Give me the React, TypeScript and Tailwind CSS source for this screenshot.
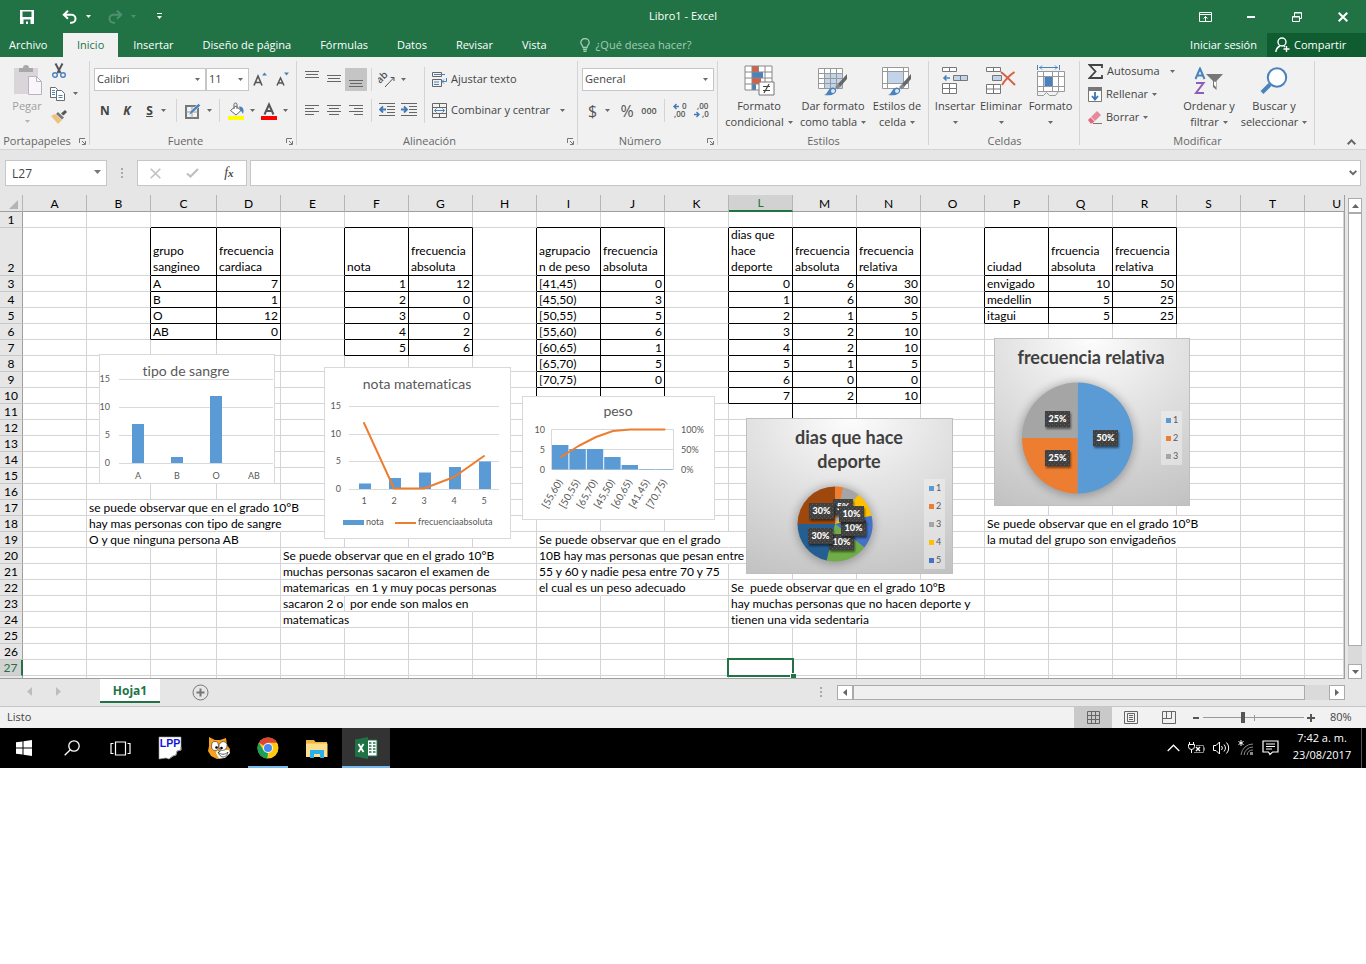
import { Fragment } from "react";
import type { ReactNode } from "react";

const COLS = "ABCDEFGHIJKLMNOPQRSTU".split("");
const ROWS = Array.from({ length: 27 }, (_, i) => i + 1);

const CELLS: Record<string, string | number> = {
  C2: "grupo\nsangineo", D2: "frecuencia\ncardiaca",
  C3: "A", D3: 7, C4: "B", D4: 1, C5: "O", D5: 12, C6: "AB", D6: 0,
  F2: "nota", G2: "frecuencia\nabsoluta",
  F3: 1, G3: 12, F4: 2, G4: 0, F5: 3, G5: 0, F6: 4, G6: 2, F7: 5, G7: 6,
  I2: "agrupacio\nn de peso", J2: "frecuencia\nabsoluta",
  I3: "[41,45)", J3: 0, I4: "[45,50)", J4: 3, I5: "[50,55)", J5: 5,
  I6: "[55,60)", J6: 6, I7: "[60,65)", J7: 1, I8: "[65,70)", J8: 5, I9: "[70,75)", J9: 0,
  L2: "dias que\nhace\ndeporte", M2: "frecuencia\nabsoluta", N2: "frecuencia\nrelativa",
  L3: 0, M3: 6, N3: 30, L4: 1, M4: 6, N4: 30, L5: 2, M5: 1, N5: 5, L6: 3, M6: 2, N6: 10,
  L7: 4, M7: 2, N7: 10, L8: 5, M8: 1, N8: 5, L9: 6, M9: 0, N9: 0, L10: 7, M10: 2, N10: 10,
  P2: "ciudad", Q2: "frcuencia\nabsoluta", R2: "frecuencia\nrelativa",
  P3: "envigado", Q3: 10, R3: 50, P4: "medellin", Q4: 5, R4: 25, P5: "itagui", Q5: 5, R5: 25,
  B17: "se puede observar que en el grado 10°B",
  B18: "hay mas personas con tipo de sangre",
  B19: "O y que ninguna persona AB",
  E20: "Se puede observar que en el grado 10°B",
  E21: "muchas personas sacaron el examen de",
  E22: "matemaricas  en 1 y muy pocas personas",
  E23: "sacaron 2 o",
  F23: " por ende son malos en",
  E24: "matematicas",
  I19: "Se puede observar que en el grado",
  I20: "10B hay mas personas que pesan entre",
  I21: "55 y 60 y nadie pesa entre 70 y 75",
  I22: "el cual es un peso adecuado",
  L22: "Se  puede observar que en el grado 10°B",
  L23: "hay muchas personas que no hacen deporte y",
  L24: "tienen una vida sedentaria",
  P18: "Se puede observar que en el grado 10°B",
  P19: "la mutad del grupo son envigadeños",
};

// first column, last column, first row, last row
const BOXES: [string, string, number, number][] = [
  ["C", "D", 2, 6],
  ["F", "G", 2, 7],
  ["I", "J", 2, 9],
  ["L", "N", 2, 10],
  ["P", "R", 2, 5],
];
const DARK_RIGHT = ["H10", "I10", "J10", "L11"];

// columns whose right gridline is hidden by overflowing text
const SPILL: Record<number, string> = {
  17: "BCD", 18: "BCDPQR", 19: "BCIJKPQR", 20: "EFGIJK", 21: "EFGIJ",
  22: "EFGIJLMN", 23: "FGLMN", 24: "ELM",
};

function boxed(col: number, row: number) {
  return BOXES.some(
    ([a, b, r1, r2]) => col >= COLS.indexOf(a) && col <= COLS.indexOf(b) && row >= r1 && row <= r2
  );
}

function cellBorder(col: number, row: number) {
  const here = boxed(col, row);
  let right = "border-r-[#d4d4d4]";
  if (here || boxed(col + 1, row) || DARK_RIGHT.includes(COLS[col] + row)) right = "border-r-black";
  else if (SPILL[row]?.includes(COLS[col])) right = "border-r-white";
  const bottom = here || boxed(col, row + 1) ? "border-b-black" : "border-b-[#d4d4d4]";
  return `${right} ${bottom}`;
}

function Caret({ className = "" }: { className?: string }) {
  return (
    <svg width="5" height="3" viewBox="0 0 5 3" className={`shrink-0 ${className || "text-[#6a6a6a]"}`}>
      <path d="M0 0h5L2.5 3z" fill="currentColor" />
    </svg>
  );
}

function TitleBar() {
  return (
    <header className="flex h-[33px] items-center bg-[#217346] text-white">
      <div className="flex flex-1 items-center">
        <button aria-label="Guardar" className="ml-5">
          <svg width="14" height="14" viewBox="0 0 14 14">
            <path d="M0 0h14v14H0z" fill="#fff" />
            <path d="M2.500 1.500h9V7h-9zM3.500 9.500h7V14H8v-2.500H6V14H3.500z" fill="#217346" />
          </svg>
        </button>
        <button aria-label="Deshacer" className="ml-7 flex items-center gap-2">
          <svg width="16" height="14" viewBox="0 0 16 14" fill="none" stroke="#fff" strokeWidth="2">
            <path d="M6 .8L1.8 4.8 6 8.8M2 4.8h7.5a4 4 0 0 1 0 8H8" />
          </svg>
          <Caret className="text-white" />
        </button>
        <button aria-label="Rehacer" className="ml-4 flex items-center gap-2 text-[#4f9070]">
          <svg width="16" height="14" viewBox="0 0 16 14" fill="none" stroke="currentColor" strokeWidth="2">
            <path d="M10 .8l4.200 4L10 8.800M14 4.800H6.500a4 4 0 0 0 0 8H8" />
          </svg>
          <Caret className="text-[#4f9070]" />
        </button>
        <button aria-label="Personalizar barra" className="ml-5">
          <svg width="7" height="7" viewBox="0 0 7 7" fill="#fff">
            <path d="M1 0h5v1H1zM1 3h5L3.500 6z" />
          </svg>
        </button>
      </div>
      <h1 className="text-[11px]">Libro1 - Excel</h1>
      <div className="flex flex-1 justify-end">
        <button aria-label="Opciones de cinta" className="flex w-[46px] justify-center">
          <svg width="13" height="10" viewBox="0 0 13 10" fill="none" stroke="#fff">
            <path d="M.5.5h12v9H.5zM.5 2.500h12M6.500 9V4.500M4.500 6.500l2-2 2 2" />
          </svg>
        </button>
        <button aria-label="Minimizar" className="flex w-[46px] items-center justify-center">
          <span className="h-0.5 w-2 bg-white" />
        </button>
        <button aria-label="Restaurar" className="flex w-[46px] justify-center">
          <svg width="10" height="10" viewBox="0 0 10 10" fill="none" stroke="#fff">
            <path d="M.5 4.500h7v5h-7zM.5 5h7M2.500 4V.5h7v6H8M2.500 1h7" />
          </svg>
        </button>
        <button aria-label="Cerrar" className="flex w-[46px] justify-center">
          <svg width="10" height="10" viewBox="0 0 10 10" stroke="#fff" strokeWidth="2">
            <path d="M.7.7l8.600 8.600M9.300.7L.7 9.300" />
          </svg>
        </button>
      </div>
    </header>
  );
}

const TABS = ["Inicio", "Insertar", "Diseño de página", "Fórmulas", "Datos", "Revisar", "Vista"];

function TabStrip() {
  return (
    <nav className="flex h-6 items-stretch gap-px bg-[#217346] text-[11px] text-white">
      <button className="w-[62px] pl-[9px] text-left">Archivo</button>
      {TABS.map((tab, i) => (
        <button key={tab} className={`px-3.5 ${i === 0 ? "bg-[#f1f1f1] text-[#217346]" : ""}`}>
          {tab}
        </button>
      ))}
      <button className="flex items-center gap-1.5 pl-[18px] text-[#a6cbb5]">
        <svg width="10" height="14" viewBox="0 0 10 14" fill="none" stroke="currentColor" strokeWidth="1.300">
          <path d="M3 9.500C3 7.500.8 6.800.8 4.500a4.200 4 0 0 1 8.400 0C9.200 6.800 7 7.500 7 9.500zM3 11.500h4M3.500 13.300h3" />
        </svg>
        ¿Qué desea hacer?
      </button>
      <div className="ml-auto flex items-stretch">
        <button className="px-2.5">Iniciar sesión</button>
        <button className="flex w-[99px] items-center gap-1 bg-[#0e5c2f] pl-2">
          <svg width="15" height="16" viewBox="0 0 15 16" fill="none" stroke="#fff" strokeWidth="1.400">
            <circle cx="7" cy="5" r="4" />
            <path d="M.8 15c.3-3 2-5 4.200-6M9 9l1 1M11.500 9v6M8.500 12h6" />
          </svg>
          Compartir
        </button>
      </div>
    </nav>
  );
}

function Group({ label, width, launcher, children }: { label: string; width: string; launcher?: boolean; children: ReactNode }) {
  return (
    <section className={`relative flex shrink-0 flex-col ${width}`}>
      <div className="flex h-[76px] px-1">{children}</div>
      <div className={`h-4 text-center leading-4 text-[#666] ${launcher ? "pr-4" : ""}`}>{label}</div>
      {launcher && (
        <button aria-label={`Más opciones de ${label}`} className="absolute right-1 bottom-1">
          <svg width="7" height="7" viewBox="0 0 7 7" fill="none" stroke="#777">
            <path d="M.5 5V.5H6M3 3l3 3M6.500 3v3.500H3" />
          </svg>
        </button>
      )}
      <span className="absolute top-1 right-0 bottom-1 w-px bg-[#d4d4d4]" />
    </section>
  );
}

function Tool({ label, children, className = "w-[22px]" }: { label: string; children: ReactNode; className?: string }) {
  return (
    <button aria-label={label} className={`flex h-[23px] shrink-0 items-center justify-center ${className}`}>
      {children}
    </button>
  );
}

function Rule() {
  return <span className="h-[23px] w-px shrink-0 bg-[#d4d4d4]" />;
}

function Combo({ label, value, width }: { label: string; value: string; width: string }) {
  return (
    <div className={`relative h-[23px] ${width}`}>
      <select aria-label={label} className="h-full w-full appearance-none border border-[#c6c6c6] bg-white pl-0.5 text-[#444]">
        <option>{value}</option>
      </select>
      <span className="pointer-events-none absolute top-2.5 right-1.5">
        <Caret />
      </span>
    </div>
  );
}

function Lines({ d, arrow }: { d: string; arrow?: string }) {
  const width = arrow ? 16 : 14;
  return (
    <svg width={width} height="17" viewBox={`0 0 ${width} 17`} fill="none" stroke="#666">
      <path d={d} />
      {arrow && <path d={arrow} stroke="#3f7ab8" strokeWidth="1.800" />}
    </svg>
  );
}

function BigButton({ icon, top, bottom, width }: { icon: ReactNode; top: string; bottom?: string; width: string }) {
  return (
    <button className={`flex shrink-0 flex-col items-center pt-1.5 leading-4 text-[#444] ${width}`}>
      <span className="flex h-[35px] items-center">{icon}</span>
      <span className="whitespace-nowrap">{top}</span>
      <span className="flex h-4 items-center gap-1 whitespace-nowrap">
        {bottom}
        <Caret />
      </span>
    </button>
  );
}

function Clipboard() {
  return (
    <Group label="Portapapeles" width="w-[90px]" launcher>
      <button className="flex w-[46px] flex-col items-center pt-1.5 leading-4 text-[#a0a0a0]">
        <svg width="30" height="35" viewBox="0 0 30 35">
          <path d="M2 5h24v26H2z" fill="#d9d5d9" />
          <path d="M7 9V5h4a3 3 0 0 1 6 0h4v4z" fill="#a8a8a8" />
          <path d="M16.500 13.500h8l5 5v13h-13z" fill="#f8f5fb" stroke="#b8b4bd" />
          <path d="M24.500 13.500v5h5" fill="none" stroke="#b8b4bd" />
        </svg>
        Pegar
        <Caret className="my-1.5 text-[#b5b5b5]" />
      </button>
      <div className="flex flex-col pt-0.5">
        <Tool label="Cortar" className="w-[18px]">
          <svg width="14" height="15" viewBox="0 0 14 15" fill="none">
            <path d="M3.500.5l5 9.500M10.500.5l-5 9.500" stroke="#555" strokeWidth="2" />
            <circle cx="3" cy="12" r="2.300" stroke="#4a82bd" strokeWidth="1.400" />
            <circle cx="11" cy="12" r="2.300" stroke="#4a82bd" strokeWidth="1.400" />
          </svg>
        </Tool>
        <Tool label="Copiar" className="w-7 gap-2">
          <svg width="15" height="14" viewBox="0 0 15 14" fill="#fff" stroke="#6b6b6b" className="shrink-0">
            <path d="M.5.5h5l2 2v8h-7z" />
            <path d="M6.500 3.500h5l3 3v7h-8z" />
            <path d="M2 3.500h3M2 5.500h3M2 7.500h3M8.500 8.500h4M8.500 10.500h4" stroke="#4a82bd" />
          </svg>
          <Caret />
        </Tool>
        <Tool label="Copiar formato" className="w-[18px]">
          <svg width="16" height="14" viewBox="0 0 16 14">
            <path d="M0 6l4-2 7 6-4 4z" fill="#eec27c" />
            <path d="M5 4l2-2 6 5.500-2 2z" fill="#777" />
            <path d="M10 3.500L14 0l2 2-3.500 3.500z" fill="#555" />
          </svg>
        </Tool>
      </div>
    </Group>
  );
}

function FontGroup() {
  return (
    <Group label="Fuente" width="w-[207px]" launcher>
      <div className="flex flex-col gap-2 pt-[11px]">
        <div className="flex">
          <Combo label="Fuente" value="Calibri" width="w-[112px]" />
          <Combo label="Tamaño de fuente" value="11" width="w-[43px]" />
          <Tool label="Aumentar tamaño">
            <svg width="14" height="15" viewBox="0 0 14 15">
              <path d="M1 13.500L5 4l4 9.500M2.500 10.500h5" fill="none" stroke="#555" strokeWidth="1.600" />
              <path d="M9 3.500h5l-2.500-3z" fill="#4a82bd" />
            </svg>
          </Tool>
          <Tool label="Disminuir tamaño">
            <svg width="13" height="15" viewBox="0 0 13 15">
              <path d="M1 13.500L4.500 6 8 13.500M2.300 11h4.400" fill="none" stroke="#555" strokeWidth="1.500" />
              <path d="M8 .5h5l-2.500 3z" fill="#4a82bd" />
            </svg>
          </Tool>
        </div>
        <div className="flex text-xs text-[#444]">
          <Tool label="Negrita"><b>N</b></Tool>
          <Tool label="Cursiva"><b className="italic">K</b></Tool>
          <Tool label="Subrayado" className="w-9 gap-2"><b className="underline">S</b><Caret /></Tool>
          <span className="w-0.5" />
          <Rule />
          <Tool label="Bordes" className="w-[42px] gap-1.5">
            <svg width="16" height="16" viewBox="0 0 16 16" fill="none">
              <path d="M1 3h12v12H1z" stroke="#777" strokeWidth="2" />
              <path d="M1 9h12M7 3v12" stroke="#999" />
              <path d="M4 12l1-3.500L13.500.5l2 2L7 10.500z" fill="#4a82bd" stroke="#f1f1f1" strokeWidth=".6" />
            </svg>
            <Caret />
          </Tool>
          <Rule />
          <Tool label="Color de relleno" className="w-[42px] gap-1.5">
            <svg width="16" height="18" viewBox="0 0 16 18">
              <path d="M2.500 8.500L8 4l5 4.500L8 13z" fill="#fff" stroke="#666" />
              <path d="M6 7V2.500a1.500 1.500 0 0 1 3 0V7" fill="none" stroke="#666" />
              <path d="M11 4.500c4-.5 5.500 3 4 7.500-1-2-1.500-3-3-4z" fill="#4a82bd" />
              <path d="M0 14h16v4H0z" fill="#ff0" />
            </svg>
            <Caret />
          </Tool>
          <Tool label="Color de fuente" className="w-6 gap-1.5">
            <svg width="16" height="18" viewBox="0 0 16 18" className="shrink-0">
              <path d="M3.500 12.500L8 2.500l4.500 10M5.500 9h5" fill="none" stroke="#555" strokeWidth="2" />
              <path d="M0 14h16v4H0z" fill="red" />
            </svg>
            <Caret />
          </Tool>
        </div>
      </div>
    </Group>
  );
}

function AlignGroup() {
  return (
    <Group label="Alineación" width="w-[281px]" launcher>
      <div className="flex w-[70px] shrink-0 flex-col gap-2 pt-[11px]">
        <div className="flex">
          <Tool label="Alinear arriba"><Lines d="M0 .5h14M1 3.500h12M0 6.500h14" /></Tool>
          <Tool label="Alinear al medio"><Lines d="M0 4.500h14M1 7.500h12M0 10.500h14" /></Tool>
          <Tool label="Alinear abajo" className="w-[22px] bg-[#c5c5c5]"><Lines d="M0 9.500h14M1 12.500h12M0 15.500h14" /></Tool>
        </div>
        <div className="flex">
          <Tool label="Izquierda"><Lines d="M0 3.500h14M0 6.500h9M0 9.500h14M0 12.500h9" /></Tool>
          <Tool label="Centrar"><Lines d="M0 3.500h14M2 6.500h10M0 9.500h14M2 12.500h10" /></Tool>
          <Tool label="Derecha"><Lines d="M0 3.500h14M5 6.500h9M0 9.500h14M5 12.500h9" /></Tool>
        </div>
      </div>
      <div className="flex w-[53px] shrink-0 flex-col gap-2 pt-[11px]">
        <div className="flex">
          <Rule />
          <Tool label="Orientación" className="w-10 gap-1.5">
            <svg width="17" height="17" viewBox="0 0 17 17" fill="none" stroke="#555">
              <text x="-1" y="10" fontSize="10" fontWeight="600" fill="#555" stroke="none" transform="rotate(-45 4 8)">ab</text>
              <path d="M7 16L16 6.500M12.500 6.500H16V10" />
            </svg>
            <Caret />
          </Tool>
        </div>
        <div className="flex">
          <Rule />
          <span className="w-1" />
          <Tool label="Disminuir sangría">
            <Lines d="M0 1.500h16M8 4.500h8M8 7.500h8M8 10.500h8M0 13.500h16" arrow="M7 7.500H1M4 4.500L1 7.500l3 3" />
          </Tool>
          <Tool label="Aumentar sangría">
            <Lines d="M0 1.500h16M8 4.500h8M8 7.500h8M8 10.500h8M0 13.500h16" arrow="M0 7.500h6M3 4.500l3 3-3 3" />
          </Tool>
        </div>
      </div>
      <span className="mt-2.5 mb-2.5 w-px shrink-0 bg-[#d4d4d4]" />
      <div className="flex flex-1 flex-col gap-2 pt-[11px] text-[#444]">
        <button className="flex h-[23px] items-center gap-1 pl-[7px]">
          <svg width="15" height="15" viewBox="0 0 15 15" fill="none">
            <path d="M.5.5h9v4h-9zM.5 7.500h9v7h-9z" stroke="#666" />
            <path d="M2 2.500h11M2 10h5M2 12.500h5M14.500 6v3.500H10M12 7.500l-2 2 2 2" stroke="#4a82bd" />
          </svg>
          Ajustar texto
        </button>
        <button className="flex h-[23px] items-center gap-1 pl-[7px] whitespace-nowrap">
          <svg width="15" height="15" viewBox="0 0 15 15" fill="none" className="shrink-0">
            <path d="M.5.500h14v14H.5zM.5 4.500h14M.5 10.500h14M7.500.5v4M7.500 10.500v4" stroke="#666" />
            <path d="M2.500 7.500h10M4.500 5.500l-2 2 2 2M10.500 5.500l2 2-2 2" stroke="#4a82bd" />
          </svg>
          Combinar y centrar
          <Caret className="ml-1.5 text-[#6a6a6a]" />
        </button>
      </div>
    </Group>
  );
}

function NumberGroup() {
  return (
    <Group label="Número" width="w-[140px]" launcher>
      <div className="flex shrink-0 flex-col gap-2 pt-[11px]">
        <Combo label="Formato de número" value="General" width="w-[132px]" />
        <div className="flex text-[#555]">
          <Tool label="Moneda" className="w-[34px] gap-2"><span className="text-base">$</span><Caret /></Tool>
          <Tool label="Porcentaje"><span className="text-base">%</span></Tool>
          <Tool label="Millares"><span className="text-[9px] font-semibold">000</span></Tool>
          <span className="w-1" />
          <Rule />
          <span className="w-1" />
          <Tool label="Aumentar decimales">
            <svg width="17" height="17" viewBox="0 0 17 17" fontSize="8" fontWeight="600" fill="#555">
              <path d="M7 4.500H2M4.500 2L2 4.500 4.500 7" fill="none" stroke="#3f7ab8" strokeWidth="1.400" />
              <text x="10" y="7">0</text>
              <text x="2" y="15">,00</text>
            </svg>
          </Tool>
          <Tool label="Disminuir decimales">
            <svg width="17" height="17" viewBox="0 0 17 17" fontSize="8" fontWeight="600" fill="#555">
              <path d="M0 12.500h5M2.500 10L5 12.500 2.500 15" fill="none" stroke="#3f7ab8" strokeWidth="1.400" />
              <text x="3" y="7">,00</text>
              <text x="8" y="15">,0</text>
            </svg>
          </Tool>
        </div>
      </div>
    </Group>
  );
}

const brush = (
  <>
    <path d="M20 18L29 8v5l-7 8z" fill="#666" />
    <path d="M17 21l3-3 2.500 2.500-3 3z" fill="#888" />
    <path d="M6 29c4-1 4-7 8.500-7.500 4-.2 5 4 2 6C14 29.500 10 29.500 6 29z" fill="#4a82bd" />
    <circle cx="15" cy="25" r="2" fill="#dce8f5" />
  </>
);

function StylesGroup() {
  return (
    <Group label="Estilos" width="w-[211px]">
      <BigButton
        width="w-[74px]"
        top="Formato"
        bottom="condicional"
        icon={
          <svg width="31" height="31" viewBox="0 0 31 31">
            <path d="M1 1h27v24H1z" fill="#fff" />
            <path d="M8 1h6v6H8zM8 13h9v6H8z" fill="#d75f43" />
            <path d="M8 7h11v6H8zM8 19h4v6H8z" fill="#4a82bd" />
            <path d="M1 1h27v24H1zM1 7h27M1 13h27M1 19h27M8 1v24M14.500 1v6M21 1v24" fill="none" stroke="#888" />
            <path d="M15 17h15v13H15z" fill="#fff" stroke="#777" />
            <path d="M19 21.500h7M19 25.500h7M25 19l-5 9" stroke="#444" strokeWidth="1.200" />
          </svg>
        }
      />
      <BigButton
        width="w-[74px]"
        top="Dar formato"
        bottom="como tabla"
        icon={
          <svg width="30" height="30" viewBox="0 0 30 30">
            <path d="M.5 2.500h24v20H.5z" fill="#fff" />
            <path d="M7 8h18v14H7z" fill="#c2d4ea" />
            <path d="M.5 2.500h24v20H.5zM.5 7.500h24M.5 12.500h24M.5 17.500h24M6.500 2.500v20M12.500 2.500v20M18.500 2.500v20" fill="none" stroke="#999" />
            {brush}
          </svg>
        }
      />
      <BigButton
        width="w-[54px]"
        top="Estilos de"
        bottom="celda"
        icon={
          <svg width="30" height="30" viewBox="0 0 30 30">
            <path d="M.5 1.500h26v21H.5z" fill="#fff" />
            <path d="M5 6h17v12H5z" fill="#c2d4ea" />
            <path d="M.5 1.500h26v21H.5zM.5 5.500h26M.5 17.500h26M5.500 1.500v21M21.500 1.500v21" fill="none" stroke="#999" />
            {brush}
          </svg>
        }
      />
    </Group>
  );
}

function CellsGroup() {
  return (
    <Group label="Celdas" width="w-[151px]">
      <BigButton
        width="w-[44px]"
        top="Insertar"
        icon={
          <svg width="27" height="29" viewBox="0 0 27 29" fill="#fff" stroke="#777">
            <path d="M.5 1.500h14v4H.5zM7.500 1.500v4M.5 17.500h14v10H.5zM.5 22.500h14M7.500 17.500v10" />
            <path d="M11.500 9.500h14v5h-14zM18.500 9.500v5" fill="#c2d4ea" />
            <path d="M8 12H2M4.500 9.500L2 12l2.500 2.500" fill="none" stroke="#4a82bd" strokeWidth="1.600" />
          </svg>
        }
      />
      <BigButton
        width="w-12"
        top="Eliminar"
        icon={
          <svg width="30" height="29" viewBox="0 0 30 29" fill="#fff" stroke="#777">
            <path d="M.5 1.500h14v4H.5zM7.500 1.500v4M.5 18.500h14v9H.5zM.5 23h14M7.500 18.500v9" />
            <path d="M6.500 9.500h9v5h-9z" fill="#c2d4ea" />
            <path d="M15 6c4 3 9 8 14 13M28.500 6C24 9 19 14 16 19" fill="none" stroke="#d75f43" strokeWidth="2" />
          </svg>
        }
      />
      <BigButton
        width="w-[51px]"
        top="Formato"
        icon={
          <svg width="28" height="32" viewBox="0 0 28 32">
            <path d="M.5 6.500h27v20H.5z" fill="#fff" />
            <path d="M.5 6.500h27v20H.5zM.5 11.500h27M.5 21.500h27M6.500 6.500v20M15.500 6.500v20M21.500 6.500v20M.5 26.500v4h6l3-3 3 3h6l3-4" fill="none" stroke="#999" />
            <path d="M7.500 12h8v9h-8z" fill="#4a82bd" />
            <path d="M.5 0v5M22.500 0v5M2 2.500h19M5 .5L3 2.500l2 2M18 .5l2 2-2 2" fill="none" stroke="#4a82bd" />
          </svg>
        }
      />
    </Group>
  );
}

function EditGroup() {
  const row = "flex h-[23px] items-center gap-1 pl-1";
  return (
    <Group label="Modificar" width="w-[235px]">
      <div className="flex w-24 shrink-0 flex-col pt-[3px] text-[#444]">
        <button className={row}>
          <svg width="15" height="15" viewBox="0 0 15 15" fill="none">
            <path d="M14 4V1H1.500l6 6.500-6 6.500H14v-3" stroke="#444" strokeWidth="1.800" />
          </svg>
          Autosuma
          <Caret className="ml-1.5 text-[#6a6a6a]" />
        </button>
        <button className={row}>
          <svg width="14" height="15" viewBox="0 0 14 15" fill="none">
            <path d="M.5.500h13v14H.5z" fill="#fff" stroke="#777" />
            <path d="M0 0h14v4H0z" fill="#777" />
            <path d="M7 5v7M4 9l3 3.500L10 9" stroke="#3a75b5" strokeWidth="1.800" />
          </svg>
          Rellenar
          <Caret />
        </button>
        <button className={row}>
          <svg width="14" height="14" viewBox="0 0 14 14">
            <path d="M3 6l6-6 4 4-6 6z" fill="#e68a9b" />
            <path d="M0 9l2.500-2.500 4 4L4 12.500H2.500z" fill="#e9657c" />
            <path d="M5 12.500h9" stroke="#777" />
          </svg>
          Borrar
          <Caret />
        </button>
      </div>
      <BigButton
        width="w-[58px]"
        top="Ordenar y"
        bottom="filtrar"
        icon={
          <svg width="30" height="28" viewBox="0 0 30 28" fill="none">
            <path d="M1.500 12L6 1.500 10.500 12M3 8.500h6" stroke="#4a82bd" strokeWidth="2" />
            <path d="M2 16h7.500L2 26h8" stroke="#8e5db5" strokeWidth="2" />
            <path d="M12 7h17l-6.500 7v9L19 20v-6z" fill="#777" />
            <path d="M20 14.500l2 .5v5l-2-2z" fill="#fff" />
          </svg>
        }
      />
      <BigButton
        width="w-[72px]"
        top="Buscar y"
        bottom="seleccionar"
        icon={
          <svg width="28" height="28" viewBox="0 0 28 28" fill="none" stroke="#4a82bd">
            <circle cx="17" cy="10.500" r="9.200" fill="#fff" strokeWidth="2" />
            <path d="M10 17.500L2 25.500" strokeWidth="4" />
          </svg>
        }
      />
    </Group>
  );
}

function Ribbon() {
  return (
    <div className="flex h-[93px] border-b border-[#d4d4d4] bg-[#f1f1f1] text-[11px]">
      <Clipboard />
      <FontGroup />
      <AlignGroup />
      <NumberGroup />
      <StylesGroup />
      <CellsGroup />
      <EditGroup />
      <button aria-label="Contraer cinta" className="mr-2.5 mb-1 ml-auto self-end">
        <svg width="9" height="6" viewBox="0 0 9 6" fill="none" stroke="#666" strokeWidth="2">
          <path d="M.7 5.200L4.500 1.400l3.800 3.800" />
        </svg>
      </button>
    </div>
  );
}

function FormulaBar() {
  return (
    <div className="flex h-[45px] bg-[#e6e6e6] px-[5px] pt-2.5 pb-[9px] text-xs text-[#444]">
      <div className="relative w-[102px]">
        <input aria-label="Cuadro de nombres" defaultValue="L27" className="h-full w-full border border-[#c6c6c6] bg-white px-1.5" />
        <svg width="7" height="4" viewBox="0 0 7 4" className="absolute top-2.5 right-1.5">
          <path d="M0 0h7L3.500 4z" fill="#777" />
        </svg>
      </div>
      <div className="flex w-[30px] flex-col items-center justify-center gap-0.5">
        <span className="size-0.5 bg-[#aaa]" />
        <span className="size-0.5 bg-[#aaa]" />
        <span className="size-0.5 bg-[#aaa]" />
      </div>
      <div className="flex w-[110px] items-center justify-around border border-[#c6c6c6] bg-white">
        <button aria-label="Cancelar">
          <svg width="11" height="11" viewBox="0 0 11 11" stroke="#c0c0c0" strokeWidth="1.600">
            <path d="M.7.7l9.600 9.600M10.300.7L.7 10.300" />
          </svg>
        </button>
        <button aria-label="Introducir">
          <svg width="13" height="10" viewBox="0 0 13 10" fill="none" stroke="#c0c0c0" strokeWidth="2.200">
            <path d="M1 5.500l3.500 3L12 1" />
          </svg>
        </button>
        <button className="font-['Liberation_Serif',serif] text-sm italic">
          f<span className="text-[11px] font-bold">x</span>
        </button>
      </div>
      <div className="relative ml-[3px] flex-1">
        <input aria-label="Barra de fórmulas" className="h-full w-full border border-[#c6c6c6] bg-white px-1" />
        <svg width="8" height="6" viewBox="0 0 8 6" fill="none" stroke="#666" strokeWidth="2" className="absolute top-2.5 right-1">
          <path d="M.7.9L4 4.200 7.300.9" />
        </svg>
      </div>
    </div>
  );
}

function Grid() {
  return (
    <table className="w-full table-fixed border-separate border-spacing-0 text-xs leading-[15px] text-black">
      <colgroup>
        <col className="w-[23px]" />
        {COLS.map((c) => (
          <col key={c} className={c === "C" ? "w-[66px]" : c === "U" ? "" : "w-16"} />
        ))}
      </colgroup>
      <thead>
        <tr className="h-[17px] bg-[#e6e6e6]">
          <th className="border-r border-b border-r-[#b5b5b5] border-b-[#9f9f9f] p-0 align-bottom">
            <svg width="9" height="9" viewBox="0 0 9 9" className="mr-1 mb-0.5 ml-auto">
              <path d="M9 0v9H0z" fill="#b4b4b4" />
            </svg>
          </th>
          {COLS.map((c) => (
            <th
              key={c}
              className={`p-0 font-normal whitespace-nowrap ${
                c === "L"
                  ? "border-r border-b-2 border-r-[#b5b5b5] border-b-[#217346] bg-[#d2d2d2] leading-[14px] text-[#217346]"
                  : c === "U"
                    ? "border-b border-[#9f9f9f] pr-[3px] text-right"
                    : "border-r border-b border-r-[#b5b5b5] border-b-[#9f9f9f]"
              }`}
            >
              {c}
            </th>
          ))}
        </tr>
      </thead>
      <tbody>
        {ROWS.map((r) => (
          <tr key={r} className={r === 2 ? "h-12" : "h-4"}>
            <th
              className={`border-b border-b-[#c6c6c6] p-0 align-bottom font-normal ${
                r === 27
                  ? "border-r-2 border-r-[#217346] bg-[#d2d2d2] text-[#217346]"
                  : "border-r border-r-[#9f9f9f] bg-[#e6e6e6]"
              }`}
            >
              {r}
            </th>
            {COLS.map((c, i) => {
              const value = CELLS[c + r];
              const selected = c === "L" && r === 27;
              return (
                <td
                  key={c}
                  className={`border-r border-b px-0.5 py-0 align-bottom whitespace-pre ${cellBorder(i, r)} ${
                    typeof value === "number" ? "text-right" : ""
                  } ${selected ? "relative" : ""}`}
                >
                  {r === 2 && value ? (
                    <span className="flex h-[47px] flex-col justify-end leading-4">{value}</span>
                  ) : (
                    value
                  )}
                  {selected && (
                    <span className="absolute -inset-0.5 border-2 border-[#217346]">
                      <span className="absolute -right-1 -bottom-1 size-1.5 border-t border-l border-white bg-[#217346]" />
                    </span>
                  )}
                </td>
              );
            })}
          </tr>
        ))}
        <tr className="h-0.5">
          <th className="border-r border-[#9f9f9f] bg-[#e6e6e6] p-0" />
          {COLS.map((c) => (
            <td key={c} className="border-r border-[#d4d4d4] p-0" />
          ))}
        </tr>
      </tbody>
    </table>
  );
}

function Frame({ place, w, h, children }: { place: string; w: number; h: number; children: ReactNode }) {
  return (
    <svg width={w} height={h} viewBox={`0 0 ${w} ${h}`} className={`absolute ${place}`} fontSize="9" fill="#595959">
      {children}
    </svg>
  );
}

function Panel({ w, h }: { w: number; h: number }) {
  return <rect x=".5" y=".5" width={w - 1} height={h - 1} fill="#fff" stroke="#d9d9d9" />;
}

function BloodChart() {
  const bars: [string, number, number][] = [["A", 39, 7], ["B", 78, 1], ["O", 117, 12], ["AB", 155, 0]];
  return (
    <Frame place="left-[99px] top-[159px]" w={176} h={130}>
      <Panel w={176} h={130} />
      {[15, 10, 5, 0].map((v, i) => (
        <Fragment key={v}>
          <path d={`M20 ${25.5 + i * 28}H174`} stroke="#d9d9d9" />
          <text x="11" y={28 + i * 28} textAnchor="end">{v}</text>
        </Fragment>
      ))}
      {bars.map(([name, x, v]) => (
        <Fragment key={name}>
          <rect x={x - 6} y={Math.round(109 - v * 5.6)} width="12" height={Math.round(v * 5.6)} fill="#5b9bd5" />
          <text x={x} y="125" textAnchor="middle">{name}</text>
        </Fragment>
      ))}
      <text x="87" y="22" fontSize="14" textAnchor="middle">tipo de sangre</text>
    </Frame>
  );
}

function GradesChart() {
  return (
    <Frame place="left-[324px] top-[172px]" w={187} h={172}>
      <Panel w={187} h={172} />
      <text x="93" y="22" fontSize="14" textAnchor="middle">nota matematicas</text>
      {[15, 10, 5, 0].map((v, i) => (
        <Fragment key={v}>
          <path d={`M25 ${Math.round(39 + i * 27.6) + 0.5}H175`} stroke="#d9d9d9" />
          <text x="17" y={Math.round(42 + i * 27.6)} textAnchor="end">{v}</text>
        </Fragment>
      ))}
      {[1, 2, 3, 4, 5].map((v) => (
        <Fragment key={v}>
          <rect x={5 + v * 30} y={122 - v * 5.5} width="12" height={v * 5.5} fill="#5b9bd5" />
          <text x={10 + v * 30} y="137" textAnchor="middle">{v}</text>
        </Fragment>
      ))}
      <path d="M40 56l30 65.500h30l30-11.500 30-21" fill="none" stroke="#ed7d31" strokeWidth="2" strokeLinecap="round" />
      <path d="M19 153h21v5H19z" fill="#5b9bd5" />
      <text x="42" y="158">nota</text>
      <path d="M71 156h21" stroke="#ed7d31" strokeWidth="2" />
      <text x="94" y="158">frecuenciaabsoluta</text>
    </Frame>
  );
}

function WeightChart() {
  const bins: [string, number][] = [
    ["[55,60)", 6], ["[50,55)", 5], ["[65,70)", 5], ["[45,50)", 3], ["[60,65)", 1], ["[41,45)", 0], ["[70,75)", 0],
  ];
  return (
    <Frame place="left-[522px] top-[201px]" w={193} h={124}>
      <Panel w={193} h={124} />
      <text x="96" y="20" fontSize="14" textAnchor="middle">peso</text>
      <path d="M29.500 33.500h122v40h-122zM29.500 53.500h122" fill="none" stroke="#d9d9d9" />
      {[10, 5, 0].map((v, i) => (
        <Fragment key={v}>
          <text x="23" y={37 + i * 20} textAnchor="end">{v}</text>
          <text x="159" y={37 + i * 20}>{v * 10}%</text>
        </Fragment>
      ))}
      {bins.map(([name, v], i) => (
        <Fragment key={name}>
          <rect x={30 + i * 17.4} y={73 - v * 4} width="16.400" height={v * 4 + 0.5} fill="#5b9bd5" />
          <text x={41 + i * 17.4} y="86" fontSize="10" textAnchor="end" transform={`rotate(-60 ${41 + i * 17.4} 86)`}>{name}</text>
        </Fragment>
      ))}
      <path d="M39 61l17.500-11 17.500-9 17-6 17.500-1.500h34" fill="none" stroke="#ed7d31" strokeWidth="2" strokeLinecap="round" strokeLinejoin="round" />
    </Frame>
  );
}

function Slices({ cx, cy, r, parts }: { cx: number; cy: number; r: number; parts: [number, string][] }) {
  const total = parts.reduce((sum, [v]) => sum + v, 0);
  const point = (v: number) => {
    const a = (v / total) * Math.PI * 2;
    return `${(cx + r * Math.sin(a)).toFixed(2)} ${(cy - r * Math.cos(a)).toFixed(2)}`;
  };
  let at = 0;
  return (
    <g>
      <circle cx={cx} cy={cy + 1} r={r + 2} fill="#000" opacity=".25" filter="url(#soft)" />
      {parts.map(([v, color]) => {
        const from = point(at);
        at += v;
        return <path key={color} d={`M${cx} ${cy}L${from}A${r} ${r} 0 0 1 ${point(at)}z`} fill={color} />;
      })}
    </g>
  );
}

function Tag({ x, y, w = 25, children }: { x: number; y: number; w?: number; children: ReactNode }) {
  return (
    <g>
      <rect x={x + 1} y={y + 2} width={w} height="16" fill="#000" opacity=".5" filter="url(#blur)" />
      <rect x={x} y={y} width={w} height="16" fill="#404040" />
      <rect x={x} y={y} width={w} height="16" fill="url(#dots)" />
      <text x={x + w / 2} y={y + 11} textAnchor="middle" fontWeight="900" fontSize="9" fill="#fff">{children}</text>
    </g>
  );
}

function PieDefs() {
  return (
    <defs>
      <radialGradient id="sheen" cx=".5" cy="0" r="1.100">
        <stop offset="0" stopColor="#fdfdfd" />
        <stop offset=".4" stopColor="#e4e4e4" />
        <stop offset="1" stopColor="#c2c2c2" />
      </radialGradient>
      <pattern id="dots" width="4" height="4" patternUnits="userSpaceOnUse">
        <path d="M0 0h1v1H0zM2 2h1v1H2z" fill="#5c5c5c" />
      </pattern>
      <filter id="blur"><feGaussianBlur stdDeviation="1" /></filter>
      <filter id="soft" x="-20%" y="-20%" width="140%" height="140%"><feGaussianBlur stdDeviation="4" /></filter>
    </defs>
  );
}

const ACCENTS = ["#5b9bd5", "#ed7d31", "#a5a5a5", "#ffc000", "#4472c4", "#70ad47", "#255e91", "#9e480e"];

function Legend({ x, y, count }: { x: number; y: number; count: number }) {
  return (
    <g>
      <rect x={x} y={y} width="21" height={count * 18} fill="#f2f2f2" opacity=".5" />
      {ACCENTS.slice(0, count).map((color, i) => (
        <Fragment key={color}>
          <rect x={x + 5} y={y + 7 + i * 18} width="5" height="5" fill={color} />
          <text x={x + 12} y={y + 12 + i * 18}>{i + 1}</text>
        </Fragment>
      ))}
    </g>
  );
}

function SportChart() {
  return (
    <Frame place="left-[746px] top-[223px]" w={207} h={156}>
      <PieDefs />
      <rect x=".5" y=".5" width="206" height="155" fill="url(#sheen)" stroke="#bfbfbf" />
      <text x="103" y="26" fontSize="18" fontWeight="700" fill="#404040" textAnchor="middle">dias que hace</text>
      <text x="103" y="50" fontSize="18" fontWeight="700" fill="#404040" textAnchor="middle">deporte</text>
      <Slices cx={89} cy={106} r={37.5} parts={ACCENTS.slice(1).map((color, i) => [i + 1, color])} />
      <Tag x={87} y={81} w={20}>5%</Tag>
      <Tag x={83} y={116}>10%</Tag>
      <Tag x={63} y={85}>30%</Tag>
      <Tag x={62} y={110}>30%</Tag>
      <Tag x={95} y={102}>10%</Tag>
      <Tag x={93} y={88}>10%</Tag>
      <Legend x={178} y={61} count={5} />
    </Frame>
  );
}

function CityChart() {
  return (
    <Frame place="left-[994px] top-[143px]" w={196} h={168}>
      <rect x=".5" y=".5" width="195" height="167" fill="url(#sheen)" stroke="#bfbfbf" />
      <text x="97" y="26" fontSize="18" fontWeight="700" fill="#404040" textAnchor="middle">frecuencia relativa</text>
      <Slices cx={83.5} cy={100} r={55.5} parts={[[50, ACCENTS[0]], [25, ACCENTS[1]], [25, ACCENTS[2]]]} />
      <Tag x={99} y={92}>50%</Tag>
      <Tag x={51} y={73}>25%</Tag>
      <Tag x={51} y={112}>25%</Tag>
      <Legend x={167} y={73} count={3} />
    </Frame>
  );
}

function Sheet() {
  return (
    <div className="flex bg-[#e6e6e6]">
      <div className="relative min-w-0 flex-1 overflow-hidden border-b border-[#9f9f9f] bg-white font-[Lato,sans-serif] [font-variant-ligatures:none]">
        <Grid />
        <BloodChart />
        <GradesChart />
        <WeightChart />
        <SportChart />
        <CityChart />
      </div>
      <div className="flex w-[22px] flex-col border-l border-[#9f9f9f] pt-[3px] pr-1 pl-[3px]">
        <button aria-label="Subir" className="flex h-[15px] items-center justify-center border border-[#ababab] bg-white">
          <svg width="7" height="4" viewBox="0 0 7 4"><path d="M0 4h7L3.500 0z" fill="#666" /></svg>
        </button>
        <div className="flex flex-1 flex-col bg-[#dadada] pb-[18px]">
          <div className="flex-1 border border-[#ababab] bg-white" />
        </div>
        <button aria-label="Bajar" className="flex h-[15px] items-center justify-center border border-[#ababab] bg-white">
          <svg width="7" height="4" viewBox="0 0 7 4"><path d="M0 0h7L3.500 4z" fill="#666" /></svg>
        </button>
      </div>
    </div>
  );
}

function SheetTabs() {
  return (
    <div className="flex h-[27px] bg-[#e6e6e6] text-xs">
      <div className="flex w-[100px] gap-6 pt-2 pl-[27px]">
        <svg width="5" height="9" viewBox="0 0 5 9"><path d="M5 0v9L0 4.500z" fill="#bdbdbd" /></svg>
        <svg width="5" height="9" viewBox="0 0 5 9"><path d="M0 0v9l5-4.500z" fill="#bdbdbd" /></svg>
      </div>
      <button className="h-6 w-[60px] border-b-2 border-[#217346] bg-white pt-0.5 font-bold text-[#217346]">Hoja1</button>
      <button aria-label="Hoja nueva" className="ml-8 self-center">
        <svg width="17" height="17" viewBox="0 0 17 17" fill="none" stroke="#777">
          <circle cx="8.500" cy="8.500" r="7.500" />
          <path d="M8.500 4.500v8M4.500 8.500h8" strokeWidth="2" />
        </svg>
      </button>
      <div className="ml-auto flex w-[525px] items-start gap-[15px] pt-1.5">
        <svg width="2" height="15" viewBox="0 0 2 15" fill="#aaa"><path d="M0 2h2v2H0zM0 6h2v2H0zM0 10h2v2H0z" /></svg>
        <div className="flex h-[15px] flex-1 bg-[#dadada]">
          <button aria-label="Izquierda" className="flex w-4 items-center justify-center border border-[#ababab] bg-white">
            <svg width="4" height="7" viewBox="0 0 4 7"><path d="M4 0v7L0 3.500z" fill="#666" /></svg>
          </button>
          <div className="mr-6 flex-1 border border-[#ababab] bg-[#f0f0f0]" />
          <button aria-label="Derecha" className="flex w-4 items-center justify-center border border-[#ababab] bg-white">
            <svg width="4" height="7" viewBox="0 0 4 7"><path d="M0 0v7l4-3.500z" fill="#666" /></svg>
          </button>
        </div>
      </div>
      <span className="w-[21px]" />
    </div>
  );
}

function StatusBar() {
  const view = "flex w-[38px] items-center justify-center";
  return (
    <footer className="flex h-[22px] items-center border-t border-[#c6c6c6] bg-[#f1f1f1] pl-[7px] text-[11px] text-[#444]">
      Listo
      <div className="ml-auto flex h-full">
        <button aria-label="Normal" className={`${view} bg-[#c9c9c9]`}>
          <svg width="13" height="13" viewBox="0 0 13 13" fill="none" stroke="#666"><path d="M.5.5h12v12H.5zM.5 4.500h12M.5 8.500h12M4.500.5v12M8.500.5v12" /></svg>
        </button>
        <button aria-label="Diseño de página" className={view}>
          <svg width="14" height="13" viewBox="0 0 14 13" fill="none" stroke="#666"><path d="M.5.5h13v12H.5zM3.500 2.500h7v8h-7zM5 4.500h4M5 6.500h4M5 8.500h4" /></svg>
        </button>
        <button aria-label="Salto de página" className={view}>
          <svg width="14" height="13" viewBox="0 0 14 13" fill="none" stroke="#666"><path d="M.5.5h13v12H.5zM4.500.5v7M.5 7.500h9v-7" /></svg>
        </button>
      </div>
      <button aria-label="Alejar" className="mr-1 ml-[5px] h-0.5 w-1.5 bg-[#555]" />
      <div className="relative flex h-full w-[101px] items-center">
        <span className="absolute top-2 left-1/2 h-1.5 w-px bg-[#999]" />
        <input
          type="range"
          aria-label="Zoom"
          min={0}
          max={100}
          defaultValue={39}
          className="relative h-px w-full appearance-none bg-[#999] [&::-webkit-slider-thumb]:h-[11px] [&::-webkit-slider-thumb]:w-1 [&::-webkit-slider-thumb]:appearance-none [&::-webkit-slider-thumb]:bg-[#555]"
        />
      </div>
      <button aria-label="Acercar" className="ml-[3px]">
        <svg width="8" height="8" viewBox="0 0 8 8" stroke="#555" strokeWidth="2"><path d="M4 0v8M0 4h8" /></svg>
      </button>
      <span className="w-[51px] pl-[15px]">80%</span>
    </footer>
  );
}

function Taskbar() {
  const item = "flex h-10 w-12 items-center justify-center";
  return (
    <div className="flex h-10 bg-black text-[11px] text-white">
      <div className="flex">
        <button aria-label="Inicio" className={item}>
          <svg width="16" height="16" viewBox="0 0 16 16" fill="#fff"><path d="M0 2.300L6.500 1.400V7.500H0zM7.500 1.200L16 0v7.500H7.500zM0 8.500h6.500v6.100L0 13.700zM7.500 8.500H16V16l-8.500-1.200z" /></svg>
        </button>
        <button aria-label="Buscar" className={item}>
          <svg width="16" height="16" viewBox="0 0 16 16" fill="none" stroke="#fff" strokeWidth="1.300"><circle cx="10" cy="6" r="5.200" /><path d="M6.300 9.700L.7 15.300" /></svg>
        </button>
        <button aria-label="Vista de tareas" className={item}>
          <svg width="21" height="15" viewBox="0 0 21 15" fill="none" stroke="#fff" strokeWidth="1.200"><path d="M5.500 1h10v13h-10zM3.500 2.500H1v10h2.500M17.500 2.500H20v10h-2.500" /></svg>
        </button>
      </div>
      <div className="ml-0.5 flex gap-px">
        <button aria-label="LPP" className={item}>
          <svg width="24" height="24" viewBox="0 0 24 24">
            <path d="M1 1h22v13l-4 1-1 4-3 1-4 3-3-1-7 1z" fill="#fff" stroke="#999" strokeWidth=".6" />
            <path d="M12 22l3-2 3-1 1-4 4-1v-3" fill="none" stroke="#999" />
            <text x="12" y="11" fontSize="10.500" fontWeight="700" fill="#1212e0" textAnchor="middle" fontFamily="Liberation Sans, sans-serif">LPP</text>
          </svg>
        </button>
        <button aria-label="Scratch" className={item}>
          <svg width="24" height="24" viewBox="0 0 24 24">
            <path d="M2 1l6 3h5l6-2 1 7 3 4-1 5-5 4-7 1-6-3-3-5 1-5z" fill="#f7a11d" />
            <path d="M9 17c0-4 6-3 13-3l1 3-5 5-6 .5z" fill="#fff" />
            <ellipse cx="8" cy="10" rx="3.500" ry="4.500" fill="#fff" stroke="#333" strokeWidth=".6" />
            <ellipse cx="16" cy="10" rx="4" ry="4.500" fill="#fff" stroke="#333" strokeWidth=".6" transform="rotate(25 16 10)" />
            <circle cx="9.500" cy="11.500" r="1.300" />
            <circle cx="14.500" cy="12" r="1.300" />
            <path d="M11 16c3 3 7 3 10 0-1 4-3 5-5 5s-4-2-5-5z" fill="#fff" stroke="#333" strokeWidth=".8" />
            <path d="M10.500 14.500h4l-2 1.600z" fill="#333" />
          </svg>
        </button>
        <button aria-label="Chrome" className={item}>
          <span className="flex h-10 w-10 items-center justify-center border-b-2 border-[#76b9ed] pt-0.5">
            <svg width="22" height="22" viewBox="0 0 22 22">
              <circle cx="11" cy="11" r="10.500" fill="#fbc914" />
              <path d="M11 11L1.900 5.700A10.500 10.500 0 0 1 20.100 5.800H11z" fill="#db4437" />
              <path d="M1.900 5.700L6.700 13.500 11 16l-.8 5.500A10.500 10.500 0 0 1 1.900 5.700z" fill="#1a9f5a" />
              <circle cx="11" cy="11" r="5" fill="#f5f5f5" />
              <circle cx="11" cy="11" r="4" fill="#4a89f3" />
            </svg>
          </span>
        </button>
        <button aria-label="Explorador" className={item}>
          <svg width="22" height="19" viewBox="0 0 22 19">
            <path d="M0 1h8l1.500 2H21v15H0z" fill="#eeb63e" />
            <path d="M0 4.500h21.500v13.500H0z" fill="#fbdf8d" />
            <path d="M4 11h14v8h-4v-4H8v4H4z" fill="#29b0ea" />
          </svg>
        </button>
        <button aria-label="Excel" className="flex h-10 w-12 items-center justify-center border-b-2 border-[#76b9ed] bg-[#333] pt-0.5">
          <svg width="23" height="22" viewBox="0 0 23 22">
            <path d="M11 3h11v16H11z" fill="#fff" stroke="#217346" />
            <path d="M14 6h2.500M18 6h2.500M14 9h2.500M18 9h2.500M14 12h2.500M18 12h2.500M14 15h2.500M18 15h2.500" stroke="#217346" strokeWidth="1.600" />
            <path d="M0 2.500L13 0v22L0 19.500z" fill="#1f7244" />
            <path d="M3.500 7l5 8M8.500 7l-5 8" stroke="#fff" strokeWidth="1.800" />
          </svg>
        </button>
      </div>
      <div className="ml-auto flex items-center gap-2">
        <svg width="13" height="8" viewBox="0 0 13 8" fill="none" stroke="#fff" strokeWidth="1.300"><path d="M.7 7l5.800-5.800L12.300 7" /></svg>
        <svg width="17" height="14" viewBox="0 0 17 14" fill="none" stroke="#fff">
          <path d="M1.500 1v2.500M5.500 1v2.500M.5 3.500h6v2a3 3 0 0 1-6 0zM3.500 8v4" />
          <path d="M6 11.500h9.500v-7H8M16.500 6.500v3" stroke="#888" />
          <path d="M8 6l4 4M12 6l-4 4" strokeWidth="1.400" />
        </svg>
        <svg width="17" height="14" viewBox="0 0 17 14" fill="none" stroke="#fff"><path d="M.5 4.500h2.500L6.500 1v12L3 9.500H.5zM8.500 5a3 3 0 0 1 0 4M11 3.500a5 5 0 0 1 0 7M13.500 1.500a8 8 0 0 1 0 11" /></svg>
        <svg width="16" height="16" viewBox="0 0 16 16" fill="none">
          <path d="M3 15A12 12 0 0 1 15 4M6 15a9 9 0 0 1 9-8M9 15a6 6 0 0 1 6-5" stroke="#888" />
          <path d="M12 12h3v3h-3z" fill="#888" />
          <path d="M3 0v6M.5 1.500l5 3M5.500 1.500l-5 3" stroke="#fff" />
        </svg>
        <svg width="17" height="16" viewBox="0 0 17 16" fill="none" stroke="#fff" strokeWidth="1.200"><path d="M1 1h15v11h-5.500L8 14.500 6.500 12H1zM4 4h9M4 6.500h9M4 9h6" /></svg>
        <div className="w-[70px] pb-1 text-center leading-[17px]">
          7:42 a. m.
          <br />
          23/08/2017
        </div>
        <span className="mr-1 -ml-1 h-10 w-px bg-[#555]" />
      </div>
    </div>
  );
}

export default function App() {
  return (
    <main className="min-h-screen bg-white font-['Open_Sans',sans-serif]">
      <TitleBar />
      <TabStrip />
      <Ribbon />
      <FormulaBar />
      <Sheet />
      <SheetTabs />
      <StatusBar />
      <Taskbar />
    </main>
  );
}
